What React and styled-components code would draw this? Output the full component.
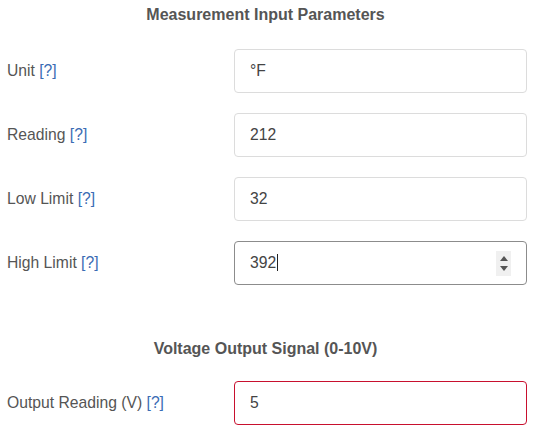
import React from 'react';
import styled, { createGlobalStyle } from 'styled-components';

const GlobalStyle = createGlobalStyle`
	body {
		margin: 0;
		background: #fff;
		font-family: "Liberation Sans", Arial, sans-serif;
		color: #555;
	}
`;

const Page = styled.div`
	width: 535px;
	padding: 3px 8px 0 7px;
	box-sizing: border-box;
`;

const Section = styled.section`
	margin-bottom: ${(props) => props.gap || '0'};
`;

const Heading = styled.h3`
	margin: 0 0 ${(props) => props.after || '22px'};
	font-size: 16px;
	line-height: 24px;
	font-weight: bold;
	text-align: center;
	color: #555;
	padding-right: 3px;
`;

const Rows = styled.div`
	display: flex;
	flex-direction: column;
	gap: 20px;
`;

const Row = styled.div`
	display: grid;
	grid-template-columns: 227px 1fr;
	align-items: center;
`;

const Label = styled.label`
	font-size: 15.7px;
	color: #555;
`;

const Help = styled.span`
	color: #3b6cb4;
`;

const FieldWrap = styled.div`
	position: relative;
`;

const Field = styled.input`
	display: block;
	width: 100%;
	height: 44px;
	box-sizing: border-box;
	padding: 0 15px;
	border: 1px solid ${(props) => props.$border || '#dcdcdc'};
	border-radius: 4px;
	font-family: "Liberation Sans", Arial, sans-serif;
	font-size: 15.7px;
	color: #444;
	background: #fff;
	outline: none;
`;

const Caret = styled.span`
	position: absolute;
	top: 13px;
	left: 43px;
	width: 1px;
	height: 17px;
	background: #222;
`;

const Spinner = styled.div`
	position: absolute;
	top: 10px;
	right: 16px;
	width: 15px;
	height: 25px;
	background: #f0f0f0;
	display: flex;
	flex-direction: column;
	align-items: center;
	justify-content: center;
	gap: 5px;
`;

const Arrow = styled.span`
	width: 0;
	height: 0;
	border-left: 4px solid transparent;
	border-right: 4px solid transparent;
	${(props) =>
		props.down ? 'border-top: 5px solid #555;' : 'border-bottom: 5px solid #555;'}
`;

const fields = [
	{ label: 'Unit', value: '°F' },
	{ label: 'Reading', value: '212' },
	{ label: 'Low Limit', value: '32' },
	{ label: 'High Limit', value: '392', focused: true },
];

const InputRow = ({ label, value, focused, border }) => (
	<Row>
		<Label>
			{label} <Help>[?]</Help>
		</Label>
		<FieldWrap>
			<Field readOnly value={value} $border={focused ? '#8c8c8c' : border} />
			{focused && (
				<>
					<Caret />
					<Spinner>
						<Arrow />
						<Arrow down />
					</Spinner>
				</>
			)}
		</FieldWrap>
	</Row>
);

const App = () => {
	return (
		<Page>
			<GlobalStyle />
			<Section gap='52px'>
				<Heading>Measurement Input Parameters</Heading>
				<Rows>
					{fields.map((f) => (
						<InputRow key={f.label} {...f} />
					))}
				</Rows>
			</Section>
			<Section>
				<Heading after='20px'>Voltage Output Signal (0-10V)</Heading>
				<Rows>
					<InputRow label='Output Reading (V)' value='5' border='#c8102e' />
				</Rows>
			</Section>
		</Page>
	);
};

export default App;
